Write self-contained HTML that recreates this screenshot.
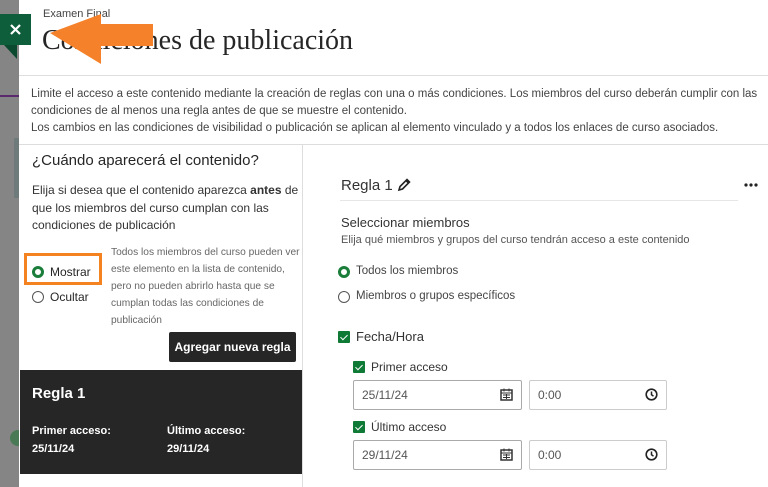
<!DOCTYPE html>
<html><head><meta charset="utf-8"><style>
*{margin:0;padding:0;box-sizing:border-box}
body{width:768px;height:487px;overflow:hidden;position:relative;background:#858585;font-family:"Liberation Sans",sans-serif;color:#262626}
.abs{position:absolute}
.modal{position:absolute;left:19px;top:0;width:749px;height:487px;background:#fff}
.t{font-size:12px;line-height:17px}
.radio{width:12px;height:12px;border-radius:50%;border:1.5px solid #555;position:absolute}
.radio.on{border:3.5px solid #1a7d3a}
.cb{width:12px;height:12px;background:#0f7a36;border-radius:1px;position:absolute}
.cb:after{content:"";position:absolute;left:4px;top:1.5px;width:3px;height:6px;border:solid #fff;border-width:0 1.6px 1.6px 0;transform:rotate(45deg)}
.inp{position:absolute;height:30px;border:1px solid #ccc;border-radius:2px;font-size:12px;color:#555;padding:7px 8px}
.inp.d{border:1.5px solid #aaa}
</style></head><body>
<div class="abs" style="left:0;top:95px;width:19px;height:2px;background:#5a2a6e"></div>
<div class="abs" style="left:14px;top:138px;width:5px;height:60px;background:#6f7a7a"></div>
<div class="abs" style="left:10px;top:430px;width:9px;height:16px;border-radius:8px 0 0 8px;background:#4a7a55"></div>
<div class="modal">
 <div class="abs" style="left:24px;top:8px;font-size:11px;color:#444">Examen Final</div>
 <div class="abs" style="left:23px;top:25px;font-family:'Liberation Serif',serif;font-size:28px;color:#262626">Condiciones de publicación</div>
 <div class="abs" style="left:0;top:75px;width:749px;height:1px;background:#ddd"></div>
 <div class="abs t" style="left:12px;top:86px;width:730px;color:#444;font-size:11.5px">Limite el acceso a este contenido mediante la creación de reglas con una o más condiciones. Los miembros del curso deberán cumplir con las condiciones de al menos una regla antes de que se muestre el contenido.<br>Los cambios en las condiciones de visibilidad o publicación se aplican al elemento vinculado y a todos los enlaces de curso asociados.</div>
 <div class="abs" style="left:0;top:144px;width:749px;height:1px;background:#ddd"></div>
 <div class="abs" style="left:283px;top:144px;width:1px;height:343px;background:#ddd"></div>
 <div class="abs" style="left:13px;top:152px;font-size:15px">¿Cuándo aparecerá el contenido?</div>
 <div class="abs" style="left:13px;top:182px;width:270px;font-size:12px;line-height:17.5px;color:#333">Elija si desea que el contenido aparezca <b>antes</b> de que los miembros del curso cumplan con las condiciones de publicación</div>
 <div class="abs" style="left:5px;top:253px;width:78px;height:32px;border:3px solid #f58220"></div>
 <div class="radio on" style="left:13px;top:266px"></div>
 <div class="abs t" style="left:31px;top:264px">Mostrar</div>
 <div class="radio" style="left:13px;top:291px"></div>
 <div class="abs t" style="left:31px;top:289px">Ocultar</div>
 <div class="abs" style="left:92px;top:244px;width:192px;font-size:10.2px;line-height:17px;color:#666">Todos los miembros del curso pueden ver este elemento en la lista de contenido, pero no pueden abrirlo hasta que se cumplan todas las condiciones de publicación</div>
 <div class="abs" style="left:150px;top:332px;width:127px;height:30px;background:#262626;color:#fff;font-size:12px;font-weight:bold;text-align:center;line-height:30px;border-radius:2px">Agregar nueva regla</div>
 <div class="abs" style="left:1px;top:370px;width:282px;height:104px;background:#262626;color:#fff">
  <div class="abs" style="left:12px;top:15px;font-size:15px;font-weight:bold">Regla 1</div>
  <div class="abs" style="left:12px;top:52px;font-size:11px;font-weight:bold;line-height:18px">Primer acceso:<br>25/11/24</div>
  <div class="abs" style="left:147px;top:52px;font-size:11px;font-weight:bold;line-height:18px">Último acceso:<br>29/11/24</div>
 </div>
 <div class="abs" style="left:322px;top:177px;font-size:15px;color:#333">Regla 1</div>
 <svg class="abs" style="left:378px;top:178px" width="14" height="14" viewBox="0 0 14 14"><path d="M2 12l1-3.5 7-7 2.5 2.5-7 7z M9 2.5l2.5 2.5" fill="none" stroke="#222" stroke-width="1.6"/></svg>
 <svg class="abs" style="left:725px;top:183px" width="14" height="4" viewBox="0 0 14 4"><circle cx="2" cy="2" r="1.6" fill="#222"/><circle cx="7" cy="2" r="1.6" fill="#222"/><circle cx="12" cy="2" r="1.6" fill="#222"/></svg>
 <div class="abs" style="left:321px;top:200px;width:398px;height:1px;background:#e6e6e6"></div>
 <div class="abs" style="left:322px;top:215px;font-size:13px;color:#333">Seleccionar miembros</div>
 <div class="abs" style="left:322px;top:234px;font-size:11px;color:#555">Elija qué miembros y grupos del curso tendrán acceso a este contenido</div>
 <div class="radio on" style="left:319px;top:266px"></div>
 <div class="abs" style="left:337px;top:265px;font-size:11.5px;color:#444">Todos los miembros</div>
 <div class="radio" style="left:319px;top:291px"></div>
 <div class="abs" style="left:337px;top:290px;font-size:11.5px;color:#444">Miembros o grupos específicos</div>
 <div class="cb" style="left:319px;top:331px"></div>
 <div class="abs" style="left:337px;top:329px;font-size:13px;color:#333">Fecha/Hora</div>
 <div class="cb" style="left:334px;top:361px"></div>
 <div class="abs" style="left:352px;top:360px;font-size:12px;color:#333">Primer acceso</div>
 <div class="inp d" style="left:334px;top:380px;width:169px">25/11/24</div>
 <div class="inp" style="left:510px;top:380px;width:138px">0:00</div>
 <div class="cb" style="left:334px;top:421px"></div>
 <div class="abs" style="left:352px;top:420px;font-size:12px;color:#333">Último acceso</div>
 <div class="inp d" style="left:334px;top:440px;width:169px">29/11/24</div>
 <div class="inp" style="left:510px;top:440px;width:138px">0:00</div>
 <svg class="abs" style="left:481px;top:388px" width="13" height="13" viewBox="0 0 13 13"><rect x="1" y="2" width="11" height="10" fill="none" stroke="#333" stroke-width="1.5"/><path d="M1 5h11M4 0.5v3M9 0.5v3M3 7h7M3 9.5h7M6.5 6v5" stroke="#333" stroke-width="1"/></svg>
 <svg class="abs" style="left:481px;top:448px" width="13" height="13" viewBox="0 0 13 13"><rect x="1" y="2" width="11" height="10" fill="none" stroke="#333" stroke-width="1.5"/><path d="M1 5h11M4 0.5v3M9 0.5v3M3 7h7M3 9.5h7M6.5 6v5" stroke="#333" stroke-width="1"/></svg>
 <svg class="abs" style="left:626px;top:388px" width="13" height="13" viewBox="0 0 13 13"><circle cx="6.5" cy="6.5" r="5.3" fill="none" stroke="#222" stroke-width="1.6"/><path d="M6.5 3.5v3.2l2 1.5" fill="none" stroke="#222" stroke-width="1.5"/></svg>
 <svg class="abs" style="left:626px;top:448px" width="13" height="13" viewBox="0 0 13 13"><circle cx="6.5" cy="6.5" r="5.3" fill="none" stroke="#222" stroke-width="1.6"/><path d="M6.5 3.5v3.2l2 1.5" fill="none" stroke="#222" stroke-width="1.5"/></svg>
</div>
<svg class="abs" style="left:0;top:14px" width="32" height="46" viewBox="0 0 32 46"><path d="M0 0h31v31H0z" fill="#0f5e3b"/><path d="M4 31h13v14z" fill="#0b4a2e"/><path d="M11 11l9 9M20 11l-9 9" stroke="#fff" stroke-width="2.2"/></svg>
<svg class="abs" style="left:48px;top:12px" width="108" height="54" viewBox="0 0 108 54"><path d="M2 21L53 2v10h52v22H53v18z" fill="#f5822a"/></svg>
</body></html>
